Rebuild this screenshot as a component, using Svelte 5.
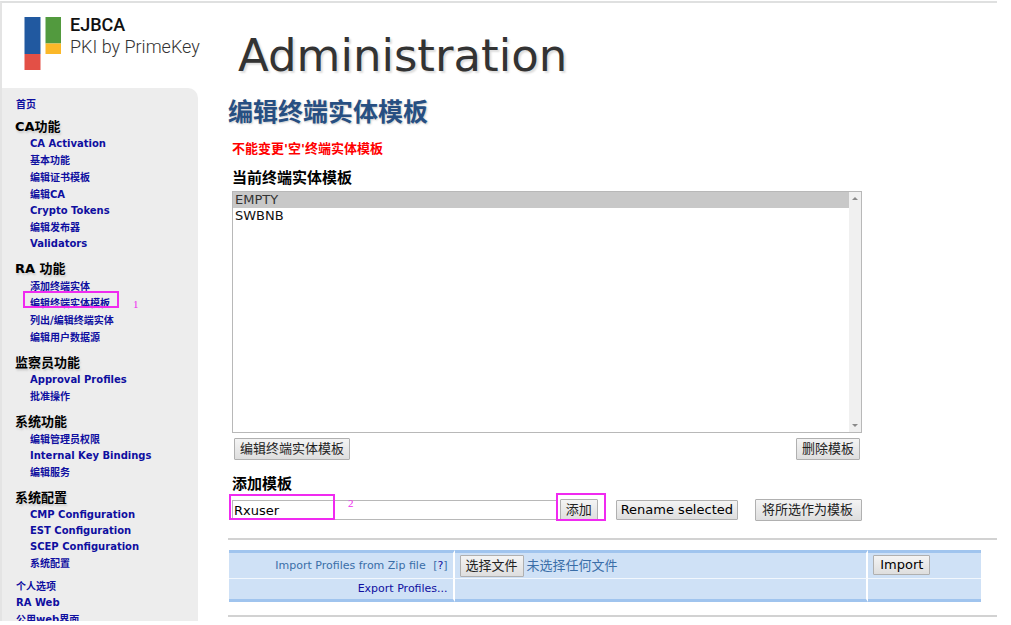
<script lang="ts">
  type Item = { label: string; marked?: boolean };
  type Group = { title: string; items: Item[] };

  const groups: Group[] = [
    {
      title: 'CA功能',
      items: [
        { label: 'CA Activation' },
        { label: '基本功能' },
        { label: '编辑证书模板' },
        { label: '编辑CA' },
        { label: 'Crypto Tokens' },
        { label: '编辑发布器' },
        { label: 'Validators' },
      ],
    },
    {
      title: 'RA 功能',
      items: [
        { label: '添加终端实体' },
        { label: '编辑终端实体模板', marked: true },
        { label: '列出/编辑终端实体' },
        { label: '编辑用户数据源' },
      ],
    },
    { title: '监察员功能', items: [{ label: 'Approval Profiles' }, { label: '批准操作' }] },
    {
      title: '系统功能',
      items: [{ label: '编辑管理员权限' }, { label: 'Internal Key Bindings' }, { label: '编辑服务' }],
    },
    {
      title: '系统配置',
      items: [
        { label: 'CMP Configuration' },
        { label: 'EST Configuration' },
        { label: 'SCEP Configuration' },
        { label: '系统配置' },
      ],
    },
  ];

  const footerLinks = ['个人选项', 'RA Web', '公用web界面'];

  const profiles = ['EMPTY', 'SWBNB'];
  let selected = $state('EMPTY');
  let name = $state('Rxuser');

  let fileInput: HTMLInputElement;
  let fileName = $state('未选择任何文件');

  function isHan(s: string) {
    return /[\u4e00-\u9fff]/.test(s);
  }

  function pickFile() {
    fileName = fileInput.files?.[0]?.name ?? '未选择任何文件';
  }
</script>

<div class="page">
  <div class="frame">
    <header>
      <a class="brand" href="#home">
        <svg width="38" height="54" viewBox="0 0 38 54" aria-hidden="true">
          <rect x="0.5" y="0" width="16" height="37" fill="#2159a0" />
          <rect x="0.5" y="37" width="16" height="16" fill="#e35046" />
          <rect x="21.5" y="0" width="15.5" height="26.5" fill="#529a3e" />
          <rect x="21.5" y="26.5" width="15.5" height="10.5" fill="#fbb829" />
        </svg>
        <span class="brand-text"><b>EJBCA</b><span>PKI by PrimeKey</span></span>
      </a>
      <h1>Administration</h1>
    </header>

    <div class="columns">
      <nav>
        <a class="top han" href="#home">首页</a>
        {#each groups as group}
          <h4>{group.title}</h4>
          <ul>
            {#each group.items as item}
              <li class:han={isHan(item.label)}>
                <a href="#menu">{item.label}</a>
                {#if item.marked}<span class="mark mark-menu"></span><span class="num num-menu">1</span>{/if}
              </li>
            {/each}
          </ul>
        {/each}
        <ul class="plain">
          {#each footerLinks as link}
            <li class:han={isHan(link)}><a href="#menu">{link}</a></li>
          {/each}
        </ul>
      </nav>

      <main>
        <h2>编辑终端实体模板</h2>
        <div class="profiles">
          <p class="error">不能变更'空'终端实体模板</p>
          <h3><label for="profiles">当前终端实体模板</label></h3>
          <div class="listbox">
            <select id="profiles" size="15" bind:value={selected}>
              {#each profiles as p}
                <option value={p}>{p}</option>
              {/each}
            </select>
            <div class="scroll" aria-hidden="true">
              <svg width="6" height="4" viewBox="0 0 6 4"><path d="M0 4L3 1L6 4Z" fill="#8a8a8a" /></svg>
              <svg width="6" height="4" viewBox="0 0 6 4"><path d="M0 0L3 3L6 0Z" fill="#8a8a8a" /></svg>
            </div>
          </div>
          <div class="actions">
            <button type="button" class="tall">编辑终端实体模板</button>
            <button type="button" class="tall">删除模板</button>
          </div>

          <h3 class="add"><label for="name">添加模板</label></h3>
          <div class="add-row">
            <span class="field">
              <input id="name" type="text" bind:value={name} />
              <span class="mark mark-name"></span>
              <span class="num num-name">2</span>
            </span>
            <span class="add-btn">
              <button type="button" class="tall">添加</button>
              <span class="mark mark-add"></span>
            </span>
            <button type="button" class="rename">Rename selected</button>
            <button type="button" class="tall template">将所选作为模板</button>
          </div>
        </div>

        <hr />
        <table>
          <tbody>
            <tr>
              <td class="label">
                <label for="zip">Import Profiles from Zip file</label>
                <span class="help">[<a href="#help">?</a>]</span>
              </td>
              <td>
                <div class="file-row">
                  <input id="zip" class="hidden-file" type="file" bind:this={fileInput} onchange={pickFile} />
                  <button type="button" class="tall" onclick={() => fileInput.click()}>选择文件</button>
                  <span>{fileName}</span>
                </div>
              </td>
              <td class="go"><button type="button">Import</button></td>
            </tr>
            <tr>
              <td class="label"><a href="#export">Export Profiles...</a></td>
              <td></td>
              <td></td>
            </tr>
          </tbody>
        </table>
        <hr class="last" />
      </main>
    </div>
  </div>
</div>

<style>
  :global(body) { margin: 0; background: #fff; }
  .page { height: 100vh; box-sizing: border-box; padding: 1px 14px 4px 0; overflow: hidden; font-family: "DejaVu Sans", "Noto Sans CJK SC", sans-serif; color: #000; }
  .frame { height: 100%; overflow: hidden; box-sizing: border-box; border-top: 2px solid #dfe0e0; border-left: 2px solid #e4e4e4; }
  h1, h2, h3, h4, p, ul { margin: 0; padding: 0; }
  ul { list-style: none; }
  a { color: #0f0fa0; text-decoration: none; }

  header { display: flex; align-items: flex-start; height: 85px; }
  .brand { display: flex; gap: 8px; width: 236px; box-sizing: border-box; padding: 14px 0 0 22px; }
  .brand-text { display: flex; flex-direction: column; font-family: Roboto, sans-serif; font-size: 18px; line-height: 22px; font-weight: 300; color: #333; margin-top: -3px; }
  .brand-text b { font-weight: 500; color: #111; }
  h1 { margin-top: 26px; font-size: 45px; line-height: 54px; font-weight: 400; color: #333; text-shadow: 2px 2px 2px #ddd; }

  .columns { display: flex; align-items: flex-start; }
  nav { flex: none; width: 196px; min-height: 100vh; box-sizing: border-box; padding: 8px 0 0 13px; background: #ededed; border-top-right-radius: 10px; font-size: 10px; font-weight: 700; line-height: 16px; }
  nav a { white-space: nowrap; }
  nav .han { line-height: 17px; }
  nav .top { display: block; margin-bottom: -3px; padding-left: 1px; }
  nav h4 { margin-top: 7px; font-size: 13px; line-height: 19px; text-shadow: 1px 2px 2px #ccc; }
  nav li { padding-left: 15px; position: relative; }
  nav .plain { margin-top: 6px; }
  nav .plain li { padding-left: 1px; }

  main { flex: 1; min-width: 0; padding: 10px 0 0 30px; }
  h2 { font-size: 25px; line-height: 30px; color: #274f82; text-shadow: 1px 1px 2px #ccc; }
  .profiles { width: calc(100% - 135px); box-sizing: border-box; padding-left: 4px; }
  .error { margin-top: 12px; font-size: 13px; line-height: 18px; font-weight: 700; color: #f00; }
  h3 { margin-top: 10px; font-size: 15px; line-height: 20px; }
  .listbox { display: flex; height: 242px; margin-top: 3px; box-sizing: border-box; border: 1px solid #b8b8b8; }
  select { flex: 1; min-width: 0; border: 0; padding: 0; border-radius: 0; outline: 0; background: #fff; font: 13px/16px "DejaVu Sans", sans-serif; color: #111; }
  option { height: 16px; min-height: 16px; box-sizing: border-box; padding: 0 2px; }
  option:checked { background: #c8c8c8 linear-gradient(#c8c8c8, #c8c8c8); color: #333; }
  .scroll { display: flex; flex-direction: column; justify-content: space-between; align-items: center; width: 12px; box-sizing: border-box; padding: 4px 0; background: #f0f0f0; }
  .scroll svg { display: block; }

  button { height: 20px; box-sizing: border-box; padding: 0 6px; border: 1px solid #b0b0b0; border-radius: 1px; background: linear-gradient(#f4f4f4, #dedede); font: 13px/18px "DejaVu Sans", "Noto Sans CJK SC", sans-serif; color: #000; white-space: nowrap; }
  button.tall { height: 22px; padding: 0 5px; line-height: 20px; color: #222; }
  .actions { display: flex; justify-content: space-between; margin-top: 5px; padding: 0 2px; }
  h3.add { margin-top: 14px; }
  .add-row { display: flex; align-items: center; margin-top: 5px; }
  .field { position: relative; display: flex; flex: 1; min-width: 0; }
  .field input { width: 100%; height: 20px; box-sizing: border-box; padding: 0 1px; border: 1px solid #b8b8b8; border-right: 0; outline: 0; font: 13px/18px "DejaVu Sans", sans-serif; color: #000; }
  .add-btn { position: relative; display: flex; margin: 0 18px 0 4px; }
  button.rename { padding: 0 4px; }
  button.template { margin-left: 17px; padding: 0 8px 0 6px; }

  .mark { position: absolute; box-sizing: border-box; border: 2px solid #f02af0; pointer-events: none; }
  .mark-menu { left: 8px; top: -4px; width: 96px; height: 17px; }
  .mark-name { left: -3px; top: -6px; width: 106px; height: 26px; }
  .mark-add { left: -4px; top: -6px; width: 50px; height: 28px; }
  .num { position: absolute; font: 11px/12px "Liberation Serif", serif; color: #f02af0; }
  .num-menu { left: 118px; top: 3px; }
  .num-name { left: 116px; top: -3px; }

  hr { height: 2px; margin: 17px 0 0; border: 0; background: #d2d2d2; }
  hr.last { margin-top: 13px; }
  table { width: calc(100% - 17px); margin: 10px 0 0 1px; border-collapse: separate; border-spacing: 0; table-layout: fixed; font-size: 11px; line-height: 20px; color: #3a6ea8; }
  td { box-sizing: border-box; height: 23px; padding: 0 5px; background: #cfe1f6; border-right: 2px solid #fff; }
  td:last-child { border-right: 0; }
  tr:first-child td { height: 29px; border-top: 3px solid #a0c4ee; border-bottom: 1px solid #f2f7fd; }
  tr:last-child td { border-bottom: 3px solid #a0c4ee; }
  td.label { width: 30%; text-align: right; }
  td.go { width: 15%; }
  .help { margin-left: 4px; }
  .file-row { display: flex; align-items: center; gap: 3px; font-size: 13px; }
  .hidden-file { position: absolute; width: 1px; height: 1px; opacity: 0; }
</style>
